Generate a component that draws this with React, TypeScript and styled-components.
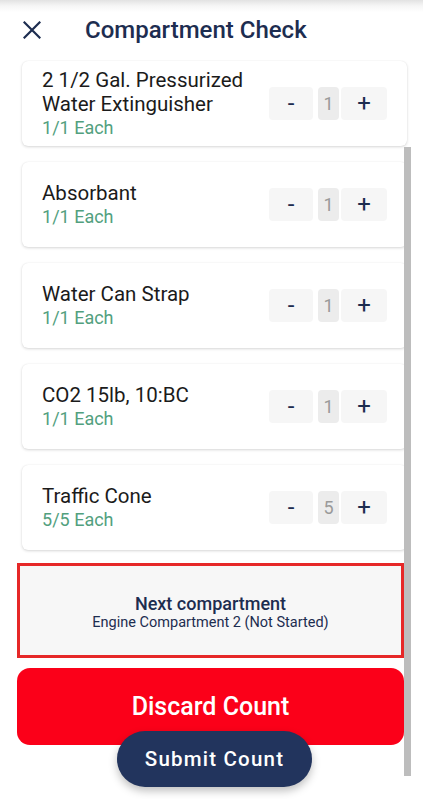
import React, { useLayoutEffect, useRef, useState } from 'react';
import styled, { createGlobalStyle } from 'styled-components';

const GlobalStyle = createGlobalStyle`
  html, body {
    margin: 0;
    padding: 0;
    background: #ffffff;
    font-family: Roboto, "Liberation Sans", Arial, sans-serif;
  }
  * { box-sizing: border-box; }
`;

const Screen = styled.div`
  position: relative;
  width: 423px;
  height: 799px;
  display: flex;
  flex-direction: column;
  background: #ffffff;
  overflow: hidden;
`;

const Header = styled.div`
  height: 60px;
  flex-shrink: 0;
  display: flex;
  align-items: center;
  padding: 0 0 0 23px;
  gap: 44px;
  background: linear-gradient(to bottom, #e2e2e2 0px, #f6f6f6 6px, #ffffff 12px);
`;

const CloseButton = styled.button`
  width: 18px;
  height: 18px;
  border: none;
  padding: 0;
  background: transparent;
  display: flex;
  align-items: center;
  justify-content: center;
`;

const Title = styled.h1`
  margin: 0;
  font-size: 24px;
  font-weight: 500;
  color: #1d2d50;
`;

const ScrollArea = styled.div`
  position: relative;
  height: 716px;
  flex-shrink: 0;
`;

const Scroller = styled.div`
  height: 100%;
  overflow: hidden;
`;

const Content = styled.div`
  display: flex;
  flex-direction: column;
  padding: 100px 0 31px;
`;

const CardList = styled.div`
  display: flex;
  flex-direction: column;
  gap: 16px;
  padding: 0 16px 0 22px;
`;

const Card = styled.div`
  display: flex;
  align-items: center;
  justify-content: space-between;
  padding: 6px 20px;
  min-height: 85px;
  background: #ffffff;
  border-radius: 6px;
  box-shadow: 0 1px 3px rgba(0, 0, 0, 0.16), 0 0 1px rgba(0, 0, 0, 0.08);
`;

const ItemInfo = styled.div`
  display: flex;
  flex-direction: column;
  max-width: 225px;
`;

const ItemName = styled.div`
  font-size: 20.5px;
  line-height: 24px;
  color: #1b1b1b;
`;

const ItemCount = styled.div`
  font-size: 18px;
  line-height: 24px;
  color: #52a07e;
`;

const Stepper = styled.div`
  display: flex;
  align-items: center;
`;

const StepButton = styled.button<{ wide?: boolean }>`
  width: ${({ wide }) => (wide ? '46px' : '44px')};
  height: 33px;
  border: none;
  border-radius: 4px;
  background: #f6f6f6;
  color: #1d2d50;
  font-family: inherit;
  font-size: 24px;
  line-height: 1;
  display: flex;
  align-items: center;
  justify-content: center;
  padding: 0 0 2px;
`;

const CountBox = styled.div`
  width: 21px;
  height: 33px;
  margin: 0 2px 0 5px;
  border-radius: 4px;
  background: #ececec;
  color: #9a9a9a;
  font-size: 18px;
  display: flex;
  align-items: center;
  justify-content: center;
`;

const NextBox = styled.div`
  margin: 13px 19px 0 17px;
  height: 95px;
  border: 3px solid #e62828;
  background: #f7f7f7;
  display: flex;
  flex-direction: column;
  align-items: center;
  justify-content: center;
  color: #1d2d50;
  padding-top: 4px;
`;

const NextTitle = styled.div`
  font-size: 18px;
  font-weight: 500;
  line-height: 20px;
`;

const NextSub = styled.div`
  font-size: 14.5px;
  line-height: 18px;
`;

const DiscardButton = styled.button`
  margin: 10px 19px 0 17px;
  height: 77px;
  border: none;
  border-radius: 13px;
  background: #fb0019;
  color: #ffffff;
  font-family: inherit;
  font-size: 25px;
  font-weight: 500;
  padding-bottom: 2px;
`;

const ScrollThumb = styled.div`
  position: absolute;
  right: 12px;
  width: 7px;
  background: #bdbdbd;
`;

const SubmitButton = styled.button`
  position: absolute;
  left: 117px;
  top: 731px;
  width: 195px;
  height: 56px;
  border: none;
  border-radius: 28px;
  background: #22345d;
  color: #ffffff;
  font-family: inherit;
  font-size: 20.5px;
  font-weight: 500;
  letter-spacing: 1.2px;
  box-shadow: 0 4px 8px rgba(0, 0, 0, 0.25);
`;

const items = [
  { name: '2 1/2 Gal. Pressurized Water Extinguisher', count: 1, total: 1 },
  { name: 'Absorbant', count: 1, total: 1 },
  { name: 'Water Can Strap', count: 1, total: 1 },
  { name: 'CO2 15lb, 10:BC', count: 1, total: 1 },
  { name: 'Traffic Cone', count: 5, total: 5 },
];

const CloseIcon = () => (
  <svg width="18" height="18" viewBox="0 0 18 18">
    <path d="M1.5 1.5 L16.5 16.5 M16.5 1.5 L1.5 16.5" stroke="#1d2d50" strokeWidth="2.2" strokeLinecap="square" />
  </svg>
);

const App: React.FC = () => {
  const scrollRef = useRef<HTMLDivElement>(null);
  const [thumb, setThumb] = useState({ top: 0, height: 0 });

  // scroll the list to the bottom, like the screenshot
  useLayoutEffect(() => {
    const el = scrollRef.current;
    if (!el) return;
    el.scrollTop = el.scrollHeight;
    const ratio = el.clientHeight / el.scrollHeight;
    setThumb({ top: el.scrollTop * ratio, height: el.clientHeight * ratio });
  }, []);

  return (
    <>
      <GlobalStyle />
      <Screen>
        <Header>
          <CloseButton>
            <CloseIcon />
          </CloseButton>
          <Title>Compartment Check</Title>
        </Header>

        <ScrollArea>
          <Scroller ref={scrollRef}>
            <Content>
              <CardList>
                {items.map((item) => (
                  <Card key={item.name}>
                    <ItemInfo>
                      <ItemName>{item.name}</ItemName>
                      <ItemCount>
                        {item.count}/{item.total} Each
                      </ItemCount>
                    </ItemInfo>
                    <Stepper>
                      <StepButton>-</StepButton>
                      <CountBox>{item.count}</CountBox>
                      <StepButton wide>+</StepButton>
                    </Stepper>
                  </Card>
                ))}
              </CardList>

              <NextBox>
                <NextTitle>Next compartment</NextTitle>
                <NextSub>Engine Compartment 2 (Not Started)</NextSub>
              </NextBox>

              <DiscardButton>Discard Count</DiscardButton>
            </Content>
          </Scroller>
          <ScrollThumb style={{ top: thumb.top, height: thumb.height }} />
        </ScrollArea>

        <SubmitButton>Submit Count</SubmitButton>
      </Screen>
    </>
  );
};

export default App;
